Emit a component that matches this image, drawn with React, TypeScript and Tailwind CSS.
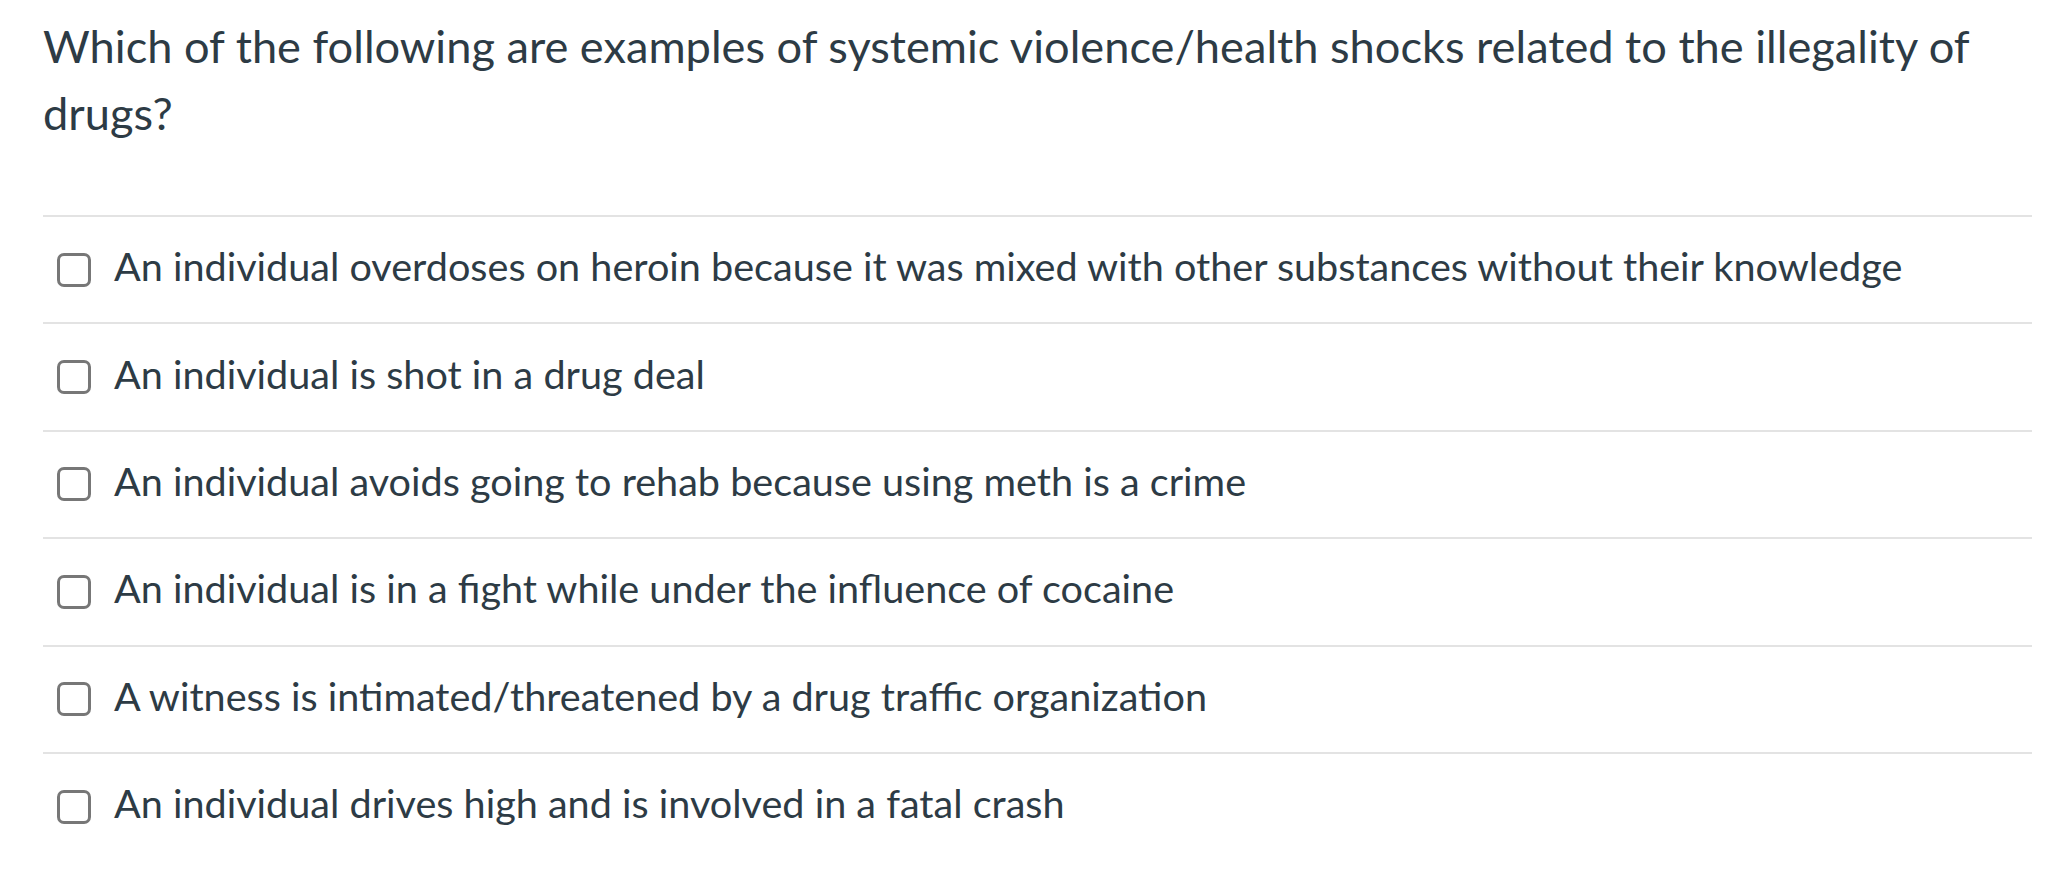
const ANSWERS = [
  "An individual overdoses on heroin because it was mixed with other substances without their knowledge",
  "An individual is shot in a drug deal",
  "An individual avoids going to rehab because using meth is a crime",
  "An individual is in a fight while under the influence of cocaine",
  "A witness is intimated/threatened by a drug traffic organization",
  "An individual drives high and is involved in a fatal crash",
];

function Checkbox() {
  return (
    <span className="block h-[34px] w-[34px] shrink-0 rounded-[7px] border-[3px] border-[#777777] bg-white" />
  );
}

export default function App() {
  return (
    <div
      className="min-h-[880px] w-full bg-white pl-[43px] pr-[30px] pt-[12px] text-[#2d3b45]"
      style={{ fontFamily: "Lato, 'Open Sans', sans-serif" }}
    >
      <p className="text-[45.2px] leading-[67px]">
        Which of the following are examples of systemic violence/health shocks related to the illegality of drugs?
      </p>
      <div className="mt-[69px]">
        {ANSWERS.map((a) => (
          <div
            key={a}
            className="flex h-[107.4px] items-center gap-[23px] border-t-2 border-[#e3e3e3] pl-[14px]"
          >
            <Checkbox />
            <span className="pb-[7px] text-[39.6px] leading-[48px]">{a}</span>
          </div>
        ))}
      </div>
    </div>
  );
}
